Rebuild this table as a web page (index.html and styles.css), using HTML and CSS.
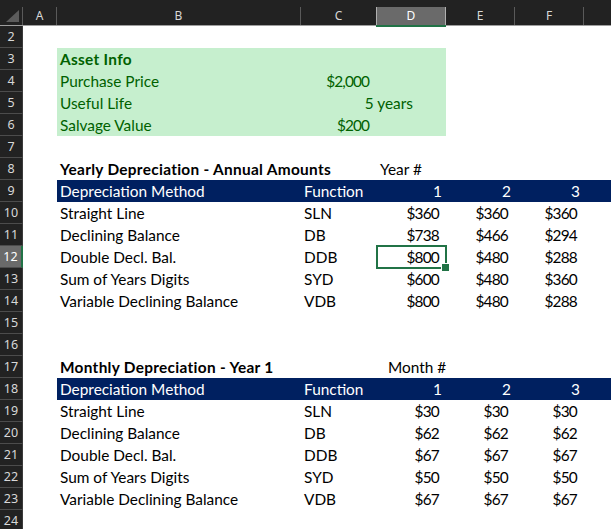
FILE: index.html
```html
<!DOCTYPE html>
<html>
<head>
<meta charset="utf-8">
<link rel="stylesheet" href="styles.css">
</head>
<body>
<div class="sheet">
  <div class="colhead">
    <div class="ch corner"><span class="tri"></span></div>
    <div class="ch">A</div>
    <div class="ch">B</div>
    <div class="ch">C</div>
    <div class="ch ch-sel">D</div>
    <div class="ch">E</div>
    <div class="ch">F</div>
    <div class="ch ch-last"></div>
  </div>

  <div class="row"><div class="rh">2</div></div>

  <div class="row">
    <div class="rh">3</div><div></div>
    <div class="c g bold">Asset Info</div><div class="c g"></div><div class="c g"></div>
  </div>
  <div class="row">
    <div class="rh">4</div><div></div>
    <div class="c g">Purchase Price</div><div class="c g num-c">$2,000</div><div class="c g"></div>
  </div>
  <div class="row">
    <div class="rh">5</div><div></div>
    <div class="c g">Useful Life</div><div class="c g span2 years">5 years</div>
  </div>
  <div class="row">
    <div class="rh">6</div><div></div>
    <div class="c g">Salvage Value</div><div class="c g num-c">$200</div><div class="c g"></div>
  </div>

  <div class="row"><div class="rh">7</div></div>

  <div class="row">
    <div class="rh">8</div><div></div>
    <div class="c bold title">Yearly Depreciation - Annual Amounts</div><div class="c"></div>
    <div class="c lbl-year">Year #</div>
  </div>
  <div class="row">
    <div class="rh">9</div><div></div>
    <div class="c n">Depreciation Method</div><div class="c n">Function</div>
    <div class="c n hd">1</div><div class="c n hd">2</div><div class="c n hd">3</div><div class="c n"></div>
  </div>
  <div class="row">
    <div class="rh">10</div><div></div>
    <div class="c">Straight Line</div><div class="c">SLN</div>
    <div class="c v">$360</div><div class="c v">$360</div><div class="c v">$360</div>
  </div>
  <div class="row">
    <div class="rh">11</div><div></div>
    <div class="c">Declining Balance</div><div class="c">DB</div>
    <div class="c v">$738</div><div class="c v">$466</div><div class="c v">$294</div>
  </div>
  <div class="row">
    <div class="rh rh-sel">12</div><div></div>
    <div class="c">Double Decl. Bal.</div><div class="c">DDB</div>
    <div class="c v sel">$800</div><div class="c v">$480</div><div class="c v">$288</div>
  </div>
  <div class="row">
    <div class="rh">13</div><div></div>
    <div class="c">Sum of Years Digits</div><div class="c">SYD</div>
    <div class="c v">$600</div><div class="c v">$480</div><div class="c v">$360</div>
  </div>
  <div class="row">
    <div class="rh">14</div><div></div>
    <div class="c">Variable Declining Balance</div><div class="c">VDB</div>
    <div class="c v">$800</div><div class="c v">$480</div><div class="c v">$288</div>
  </div>

  <div class="row"><div class="rh">15</div></div>
  <div class="row"><div class="rh">16</div></div>

  <div class="row">
    <div class="rh">17</div><div></div>
    <div class="c bold title">Monthly Depreciation - Year 1</div><div class="c"></div>
    <div class="c lbl-month">Month #</div>
  </div>
  <div class="row">
    <div class="rh">18</div><div></div>
    <div class="c n">Depreciation Method</div><div class="c n">Function</div>
    <div class="c n hd">1</div><div class="c n hd">2</div><div class="c n hd">3</div><div class="c n"></div>
  </div>
  <div class="row">
    <div class="rh">19</div><div></div>
    <div class="c">Straight Line</div><div class="c">SLN</div>
    <div class="c v">$30</div><div class="c v">$30</div><div class="c v">$30</div>
  </div>
  <div class="row">
    <div class="rh">20</div><div></div>
    <div class="c">Declining Balance</div><div class="c">DB</div>
    <div class="c v">$62</div><div class="c v">$62</div><div class="c v">$62</div>
  </div>
  <div class="row">
    <div class="rh">21</div><div></div>
    <div class="c">Double Decl. Bal.</div><div class="c">DDB</div>
    <div class="c v">$67</div><div class="c v">$67</div><div class="c v">$67</div>
  </div>
  <div class="row">
    <div class="rh">22</div><div></div>
    <div class="c">Sum of Years Digits</div><div class="c">SYD</div>
    <div class="c v">$50</div><div class="c v">$50</div><div class="c v">$50</div>
  </div>
  <div class="row">
    <div class="rh">23</div><div></div>
    <div class="c">Variable Declining Balance</div><div class="c">VDB</div>
    <div class="c v">$67</div><div class="c v">$67</div><div class="c v">$67</div>
  </div>
  <div class="row"><div class="rh">24</div></div>
</div>
</body>
</html>
```

FILE: styles.css
```css
:root {
  --cols: 23px 34px 244px 76px 69px 69px 69px 27px;
  --hdr: #222222;
  --hdr-sel: #6a6a6a;
  --accent: #217346;
}
* { box-sizing: border-box; }
html, body { margin: 0; padding: 0; background: #ffffff; }
body { overflow: hidden; }
.sheet {
  width: 611px;
  height: 529px;
  overflow: hidden;
  font-family: Lato, "Liberation Sans", sans-serif;
  font-size: 15.4px;
  color: #000000;
}
.colhead {
  display: grid;
  grid-template-columns: var(--cols);
  height: 26px;
  background: var(--hdr);
  border-bottom: 1px solid #9e9e9e;
  padding-top: 7px;
}
.ch {
  height: 18px;
  line-height: 18px;
  text-align: center;
  color: #d8d8d8;
  font-family: "Noto Sans", "Liberation Sans", sans-serif;
  font-size: 12px;
  border-right: 1px solid #5a5a5a;
}
.ch-last { border-right: none; }
.corner { position: relative; }
.tri {
  position: absolute;
  right: 3px;
  bottom: 3px;
  width: 0;
  height: 0;
  border-left: 13px solid transparent;
  border-bottom: 12px solid #5c5c5c;
}
.ch-sel {
  background: var(--hdr-sel);
  color: #ffffff;
  border-left: 1px solid #b0b0b0;
  border-right: 1px solid #b0b0b0;
  margin-left: -1px;
  box-shadow: 0 2px 0 var(--accent);
}
.row {
  display: grid;
  grid-template-columns: var(--cols);
  height: 22px;
}
.rh {
  background: var(--hdr);
  color: #d8d8d8;
  font-family: "Noto Sans", "Liberation Sans", sans-serif;
  font-size: 12.5px;
  text-align: center;
  line-height: 21px;
  border-bottom: 1px solid #4c4c4c;
  border-right: 1px solid #3a3a3a;
}
.rh-sel {
  background: var(--hdr-sel);
  color: #ffffff;
  border-right: 2px solid var(--accent);
}
.c {
  padding: 0 3px;
  line-height: 22px;
  white-space: nowrap;
  overflow: visible;
}
.bold { font-weight: 700; letter-spacing: 0.3px; }
.g { background: #c6efce; color: #006100; }
.num-c { text-align: right; padding-right: 8px; letter-spacing: -0.9px; }
.span2 { grid-column: span 2; }
.years { text-align: right; padding-right: 33px; }
.title { overflow: visible; }
.lbl-year { padding-left: 3px; }
.lbl-month { padding-left: 11px; }
.n { background: #002060; color: #ffffff; }
.hd { text-align: right; padding-right: 4px; }
.v { text-align: right; padding-right: 7px; letter-spacing: -0.8px; }
.sel { position: relative; }
.sel::after {
  content: "";
  position: absolute;
  left: -1px;
  top: -1px;
  right: -1px;
  bottom: -1px;
  border: 2px solid var(--accent);
}
.sel::before {
  content: "";
  position: absolute;
  right: -4px;
  bottom: -4px;
  width: 7px;
  height: 7px;
  background: var(--accent);
  border: 1px solid #ffffff;
  z-index: 2;
}
```
